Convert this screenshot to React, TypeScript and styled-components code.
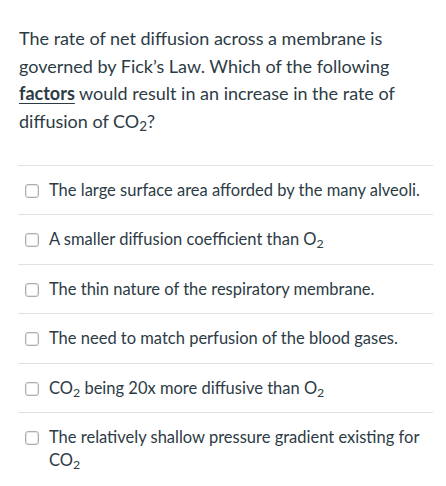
import React from 'react';
import styled, { createGlobalStyle } from 'styled-components';

const GlobalStyle = createGlobalStyle`
  html, body {
    margin: 0;
    padding: 0;
    background: #ffffff;
  }
  body {
    font-family: Lato, "Noto Sans", "Liberation Sans", sans-serif;
    color: #2d3b45;
  }
`;

const Quiz = styled.div`
  width: 446px;
  padding: 25px 13px 0 18px;
  box-sizing: border-box;
`;

const Question = styled.p`
  margin: 0 0 29px 1px;
  font-size: 18px;
  line-height: 27.7px;
`;

const Term = styled.strong`
  font-weight: 700;
  text-decoration: underline;
  text-underline-offset: 3px;
`;

const Answers = styled.ul`
  list-style: none;
  margin: 0;
  padding: 0;
  border-top: 1px solid #dfe2e4;
`;

const Answer = styled.li`
  display: flex;
  align-items: flex-start;
  gap: 10px;
  padding: 13px 0 12.5px 7px;
  border-bottom: 1px solid #dfe2e4;
  &:last-child {
    border-bottom: none;
  }
`;

const Box = styled.span`
  flex: none;
  width: 14px;
  height: 14px;
  margin-top: 5px;
  box-sizing: border-box;
  border: 1px solid #a8b0b5;
  border-radius: 3px;
  background: #fff;
  box-shadow: inset 0 0 0 1px #e4e7e9;
`;

const Label = styled.span`
  font-size: 16.5px;
  line-height: 23px;
`;

const Rich = styled.span`
  sub {
    font-size: 0.75em;
    line-height: 1;
    vertical-align: -0.25em;
  }
`;

const answers: React.ReactNode[] = [
  'The large surface area afforded by the many alveoli.',
  <>A smaller diffusion coefficient than O<sub>2</sub></>,
  'The thin nature of the respiratory membrane.',
  'The need to match perfusion of the blood gases.',
  <>CO<sub>2</sub> being 20x more diffusive than O<sub>2</sub></>,
  <>The relatively shallow pressure gradient existing for CO<sub>2</sub></>,
];

export default function App() {
  return (
    <>
      <GlobalStyle />
      <Quiz>
        <Question>
          <Rich>
            The rate of net diffusion across a membrane is governed by Fick’s Law. Which of the
            following <Term>factors</Term> would result in an increase in the rate of diffusion of
            CO<sub>2</sub>?
          </Rich>
        </Question>
        <Answers>
          {answers.map((a, i) => (
            <Answer key={i}>
              <Box />
              <Label>
                <Rich>{a}</Rich>
              </Label>
            </Answer>
          ))}
        </Answers>
      </Quiz>
    </>
  );
}
